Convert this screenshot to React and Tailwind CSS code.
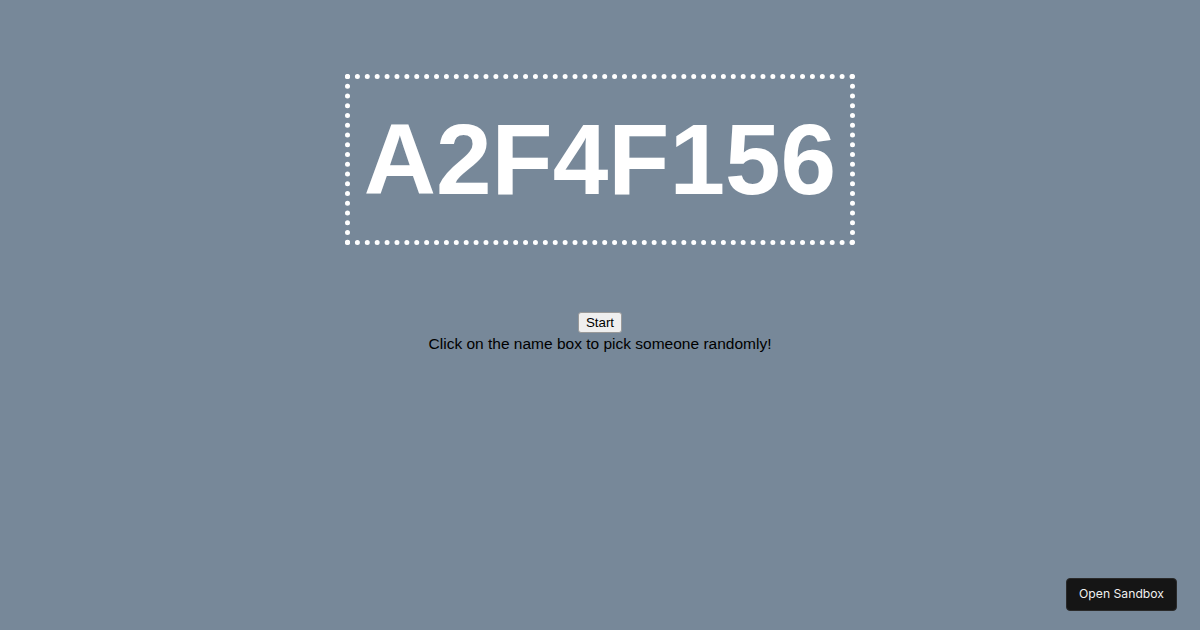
import React, { useState } from "react";

const names = ["A2F4F156", "B7C1D903", "E5A0C278", "F9D3B412"];

const App = () => {
  const [name, setName] = useState(names[0]);

  const pick = () => {
    setName(names[Math.floor(Math.random() * names.length)]);
  };

  return (
    <div className="relative min-h-screen w-full bg-[#778899] font-['Liberation_Sans',Arial,sans-serif] text-black">
      <div className="flex flex-col items-center pt-[74px]">
        {/* name box */}
        <div
          onClick={pick}
          className="cursor-pointer border-[5px] border-dotted border-white px-[14px] py-[23px] text-[100px] font-bold leading-[115px] text-white"
        >
          {name}
        </div>

        <button
          onClick={pick}
          className="mt-[67px] h-[21px] rounded-[3px] border border-[#9a9a9a] bg-[#efefef] px-[7px] text-[13.33px] leading-[19px] text-black"
        >
          Start
        </button>
        <p className="text-[15.5px] leading-[21px]">
          Click on the name box to pick someone randomly!
        </p>
      </div>

      <button className="absolute bottom-[19px] right-[23px] h-[33px] w-[111px] rounded-[4px] border border-[#2a2a2a] bg-[#151515] text-center font-['Inter',sans-serif] text-[12.2px] text-[#f0f0f0]">
        Open Sandbox
      </button>
    </div>
  );
};

export default App;
